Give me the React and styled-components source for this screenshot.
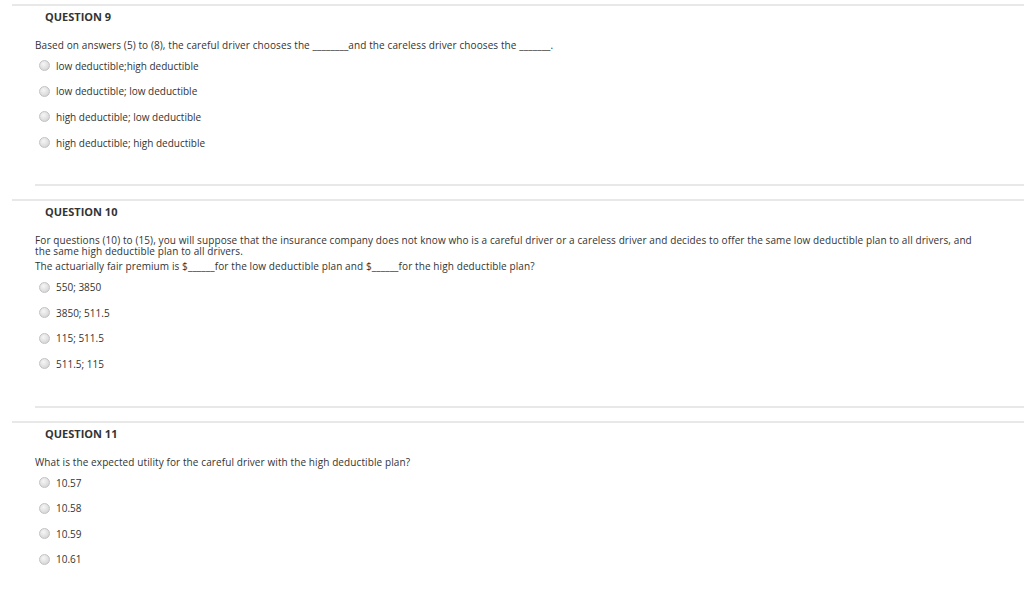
import styled, { createGlobalStyle } from 'styled-components'

const GlobalStyle = createGlobalStyle`
  body {
    margin: 0;
    background: #fff;
    font-family: "Open Sans", "Liberation Sans", sans-serif;
    color: #333;
  }
`

const Page = styled.div`
  padding-top: 4px;
`

const Section = styled.section`
  margin-left: 12px;
  border-top: 2px solid #e8e8e8;
`

const Header = styled.h3`
  margin: 0;
  padding: 4px 0 0 33px;
  font-size: 11px;
  line-height: 14px;
  font-weight: 700;
  color: #333;
`

const Body = styled.div`
  margin: 16px 0 0 23px;
  padding-bottom: 29px;
  border-bottom: 2px solid #e8e8e8;
  margin-bottom: 13px;
`

const Prompt = styled.p`
  margin: 0 0 ${p => p.$gap || 0}px;
  font-size: 10px;
  line-height: 11px;
  letter-spacing: 0.1px;
  max-width: 945px;
`

const Options = styled.ul`
  list-style: none;
  margin: 2px 0 0;
  padding: 0;
`

const Option = styled.li`
  display: flex;
  align-items: center;
  height: 25.6px;
  padding-left: 4px;
  font-size: 10px;
`

const Radio = styled.span`
  width: 9px;
  height: 9px;
  border-radius: 50%;
  border: 1px solid #c2c2c2;
  background: radial-gradient(circle at 40% 35%, #f6f6f6 0%, #dedede 60%, #cacaca 100%);
  margin-right: 6px;
  flex: none;
`

const questions = [
  {
    title: 'QUESTION 9',
    prompt: ['Based on answers (5) to (8), the careful driver chooses the ________and the careless driver chooses the _______.'],
    options: ['low deductible;high deductible', 'low deductible; low deductible', 'high deductible; low deductible', 'high deductible; high deductible']
  },
  {
    title: 'QUESTION 10',
    prompt: [
      'For questions (10) to (15), you will suppose that the insurance company does not know who is a careful driver or a careless driver and decides to offer the same low deductible plan to all drivers, and the same high deductible plan to all drivers.',
      'The actuarially fair premium is $______for the low deductible plan and $______for the high deductible plan?'
    ],
    options: ['550; 3850', '3850; 511.5', '115; 511.5', '511.5; 115']
  },
  {
    title: 'QUESTION 11',
    prompt: ['What is the expected utility for the careful driver with the high deductible plan?'],
    options: ['10.57', '10.58', '10.59', '10.61']
  }
]

export default function App () {
  return (
    <Page>
      <GlobalStyle />
      {questions.map(q => (
        <Section key={q.title}>
          <Header>{q.title}</Header>
          <Body>
            {q.prompt.map((t, i) => (
              <Prompt key={i} $gap={i < q.prompt.length - 1 ? 4 : 0}>{t}</Prompt>
            ))}
            <Options>
              {q.options.map(o => (
                <Option key={o}><Radio />{o}</Option>
              ))}
            </Options>
          </Body>
        </Section>
      ))}
    </Page>
  )
}
